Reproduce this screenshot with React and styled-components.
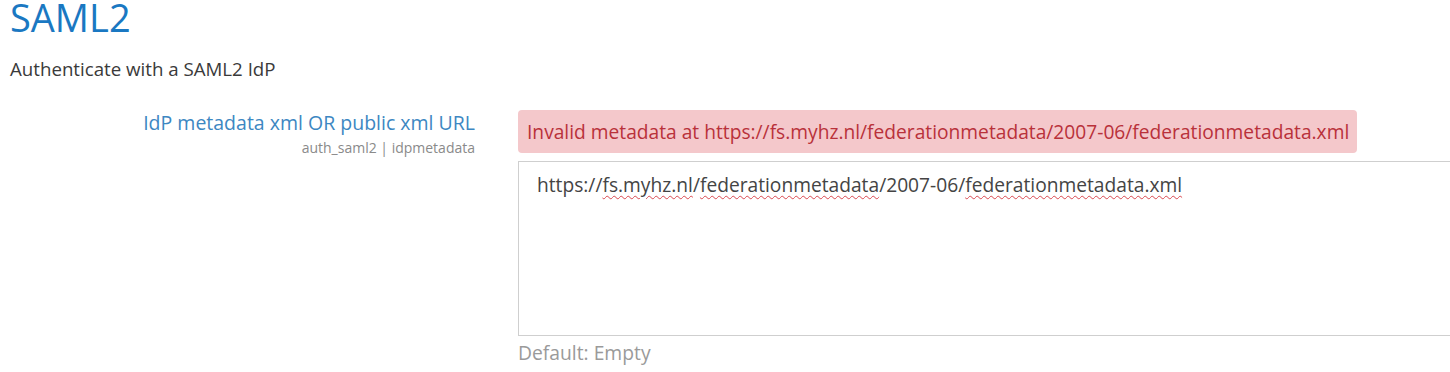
import React from 'react'
import styled, { createGlobalStyle } from 'styled-components'

//---------------------------------------------
//   Global
//---------------------------------------------
const GlobalStyle = createGlobalStyle`
  html, body {
    margin: 0;
    padding: 0;
    background: #fff;
    overflow: hidden;
  }
  body {
    font-family: "Open Sans", "Liberation Sans", sans-serif;
    color: #333;
  }
`

//----------------------------//
//   Styles
//----------------------------//
const Page = styled.div`
  padding-left: 10px;
`

const Title = styled.h2`
  margin: 0;
  font-size: 38px;
  font-weight: 400;
  line-height: 34px;
  color: #1a78c2;
`

const Intro = styled.p`
  margin: 22px 0 0;
  font-size: 18.7px;
  line-height: 26px;
  color: #3a3a3a;
`

const Row = styled.div`
  display: grid;
  grid-template-columns: 465px 1fr;
  column-gap: 43px;
  margin-top: 28px;
`

const LabelCol = styled.div`
  display: flex;
  flex-direction: column;
  align-items: flex-end;
`

const Label = styled.label`
  font-size: 19.5px;
  line-height: 26px;
  color: #3d87c2;
`

const Setting = styled.span`
  margin-top: 4px;
  font-size: 14px;
  line-height: 16px;
  color: #8a8a8a;
`

const Field = styled.div`
  display: flex;
  flex-direction: column;
  align-items: flex-start;
`

const ErrorBox = styled.div`
  height: 43px;
  padding: 0 8px 0 9px;
  border-radius: 4px;
  background: #f4c8cb;
  color: #b9313a;
  font-size: 19.2px;
  line-height: 43px;
  white-space: nowrap;
`

const TextArea = styled.div`
  box-sizing: border-box;
  width: 980px;
  height: 175px;
  margin-top: 8px;
  padding: 9px 18px;
  border: 1px solid #cfcfcf;
  background: #fff;
  font-size: 19.2px;
  line-height: 28px;
  color: #444;
  white-space: nowrap;
`

const Typo = styled.span`
  text-decoration: underline wavy #d9484f;
  text-decoration-thickness: 1px;
  text-underline-offset: 3px;
`

const DefaultNote = styled.div`
  margin-top: 4px;
  font-size: 19.3px;
  line-height: 26px;
  color: #9a9a9a;
`

// ---------------------------------------------
//   Return
//---------------------------------------------
const App = () => {
  const url = 'https://fs.myhz.nl/federationmetadata/2007-06/federationmetadata.xml'

  return (
    <>
      <GlobalStyle />
      <Page>
        <Title>SAML2</Title>
        <Intro>Authenticate with a SAML2 IdP</Intro>
        <Row>
          <LabelCol>
            <Label htmlFor="idpmetadata">IdP metadata xml OR public xml URL</Label>
            <Setting>auth_saml2 | idpmetadata</Setting>
          </LabelCol>
          <Field>
            <ErrorBox>Invalid metadata at {url}</ErrorBox>
            <TextArea id="idpmetadata">
              https://<Typo>fs.myhz.nl</Typo>/<Typo>federationmetadata</Typo>/2007-06/<Typo>federationmetadata.xml</Typo>
            </TextArea>
            <DefaultNote>Default: Empty</DefaultNote>
          </Field>
        </Row>
      </Page>
    </>
  )
}

export default App
